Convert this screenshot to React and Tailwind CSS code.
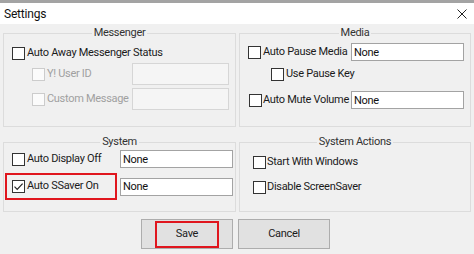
import clsx from 'clsx'

function Check({ checked, disabled }) {
  return (
    <span
      className={clsx(
        'w-[13px] h-[13px] border flex items-center justify-center shrink-0',
        disabled ? 'border-[#cccccc] bg-[#fbfbfb]' : 'border-[#333333] bg-white'
      )}
    >
      {checked && (
        <svg width="11" height="11" viewBox="0 0 11 11" fill="none">
          <path d="M1.5 5.6 L4.2 8.3 L9.6 2.6" stroke="#222" strokeWidth="1.2" />
        </svg>
      )}
    </span>
  )
}

function Field({ value = '', disabled, className }) {
  return (
    <div
      className={clsx(
        'border flex items-center pl-[2px] leading-none shrink-0',
        disabled ? 'bg-[#f5f5f5] border-[#d6d6d6]' : 'bg-white border-[#a3a3a3] text-[#111]',
        className
      )}
    >
      {value}
    </div>
  )
}

function Group({ title, className, children }) {
  return (
    <fieldset className={clsx('border border-[#dcdcdc] min-w-0', className)}>
      <legend className="mx-auto px-[2px] leading-[14px] text-[#333]">{title}</legend>
      {children}
    </fieldset>
  )
}

export default function App() {
  return (
    <div className="w-[474px] h-[254px] overflow-hidden bg-[#f0f0f0] font-['Roboto',sans-serif] text-[11px] tracking-[-0.3px] text-[#1b1b1b] whitespace-nowrap">
      <div className="h-[3px] bg-[#a3a3a3]" />
      <div className="h-[21px] bg-white flex items-center justify-between pl-[4px] pr-[7px]">
        <span className="text-[12px] tracking-[-0.2px] text-[#111]">Settings</span>
        <svg width="10" height="10" viewBox="0 0 10 10">
          <path d="M0.5 0.5 L9.5 9.5 M9.5 0.5 L0.5 9.5" stroke="#222" strokeWidth="1" />
        </svg>
      </div>

      <div className="pt-[2px] px-[3px]">
        <div className="grid grid-cols-[233px_232px] gap-x-[3px] gap-y-[8px]">
          <Group title="Messenger" className="h-[101px]">
            <div className="mt-[3px] h-[20px] flex items-center pl-[8px]">
              <Check />
              <span className="ml-[2px]">Auto Away Messenger Status</span>
            </div>
            <div className="h-[22px] flex items-center">
              <div className="w-[128px] flex items-center pl-[28px] text-[#a0a0a0]">
                <Check disabled />
                <span className="ml-[2px]">Y! User ID</span>
              </div>
              <Field disabled className="w-[97px] h-[22px]" />
            </div>
            <div className="mt-[3px] h-[22px] flex items-center">
              <div className="w-[128px] flex items-center pl-[28px] text-[#a0a0a0]">
                <Check disabled />
                <span className="ml-[2px]">Custom Message</span>
              </div>
              <Field disabled className="w-[97px] h-[22px]" />
            </div>
          </Group>

          <Group title="Media" className="h-[101px]">
            <div className="mt-[3px] h-[18px] flex items-center">
              <div className="w-[111px] flex items-center pl-[8px]">
                <Check />
                <span className="ml-[2px]">Auto Pause Media</span>
              </div>
              <Field value="None" className="w-[113px] h-[18px]" />
            </div>
            <div className="mt-[4px] h-[18px] flex items-center pl-[31px]">
              <Check />
              <span className="ml-[2px]">Use Pause Key</span>
            </div>
            <div className="mt-[8px] h-[18px] flex items-center">
              <div className="w-[111px] flex items-center pl-[9px]">
                <Check />
                <span className="ml-[1px]">Auto Mute Volume</span>
              </div>
              <Field value="None" className="w-[113px] h-[18px]" />
            </div>
          </Group>

          <Group title="System" className="h-[77px]">
            <div className="h-[20px] flex items-center">
              <div className="ml-[1px] w-[112px] flex items-center pl-[7px]">
                <Check />
                <span className="ml-[2px]">Auto Display Off</span>
              </div>
              <Field value="None" className="ml-[3px] w-[113px] h-[18px]" />
            </div>
            <div className="mt-[4px] h-[27px] flex items-center">
              <div className="ml-[1px] w-[112px] h-[27px] border-2 border-[#e0161e] flex items-center pl-[5px]">
                <Check checked />
                <span className="ml-[2px]">Auto SSaver On</span>
              </div>
              <Field value="None" className="ml-[3px] w-[113px] h-[18px]" />
            </div>
          </Group>

          <Group title="System Actions" className="h-[77px]">
            <div className="mt-[4px] h-[18px] flex items-center pl-[13px]">
              <Check />
              <span className="ml-[1px]">Start With Windows</span>
            </div>
            <div className="mt-[7px] h-[18px] flex items-center pl-[13px]">
              <Check />
              <span className="ml-[1px]">Disable ScreenSaver</span>
            </div>
          </Group>
        </div>

        <div className="mt-[7px] flex justify-center gap-[5px] pr-[3px]">
          <button className="w-[92px] h-[30px] border border-[#adadad] bg-[#e1e1e1] flex items-center justify-center">
            <span className="w-[64px] h-[27px] border-2 border-[#e0161e] flex items-center justify-center">Save</span>
          </button>
          <button className="w-[92px] h-[30px] border border-[#adadad] bg-[#e1e1e1] flex items-center justify-center">
            Cancel
          </button>
        </div>
      </div>
    </div>
  )
}
